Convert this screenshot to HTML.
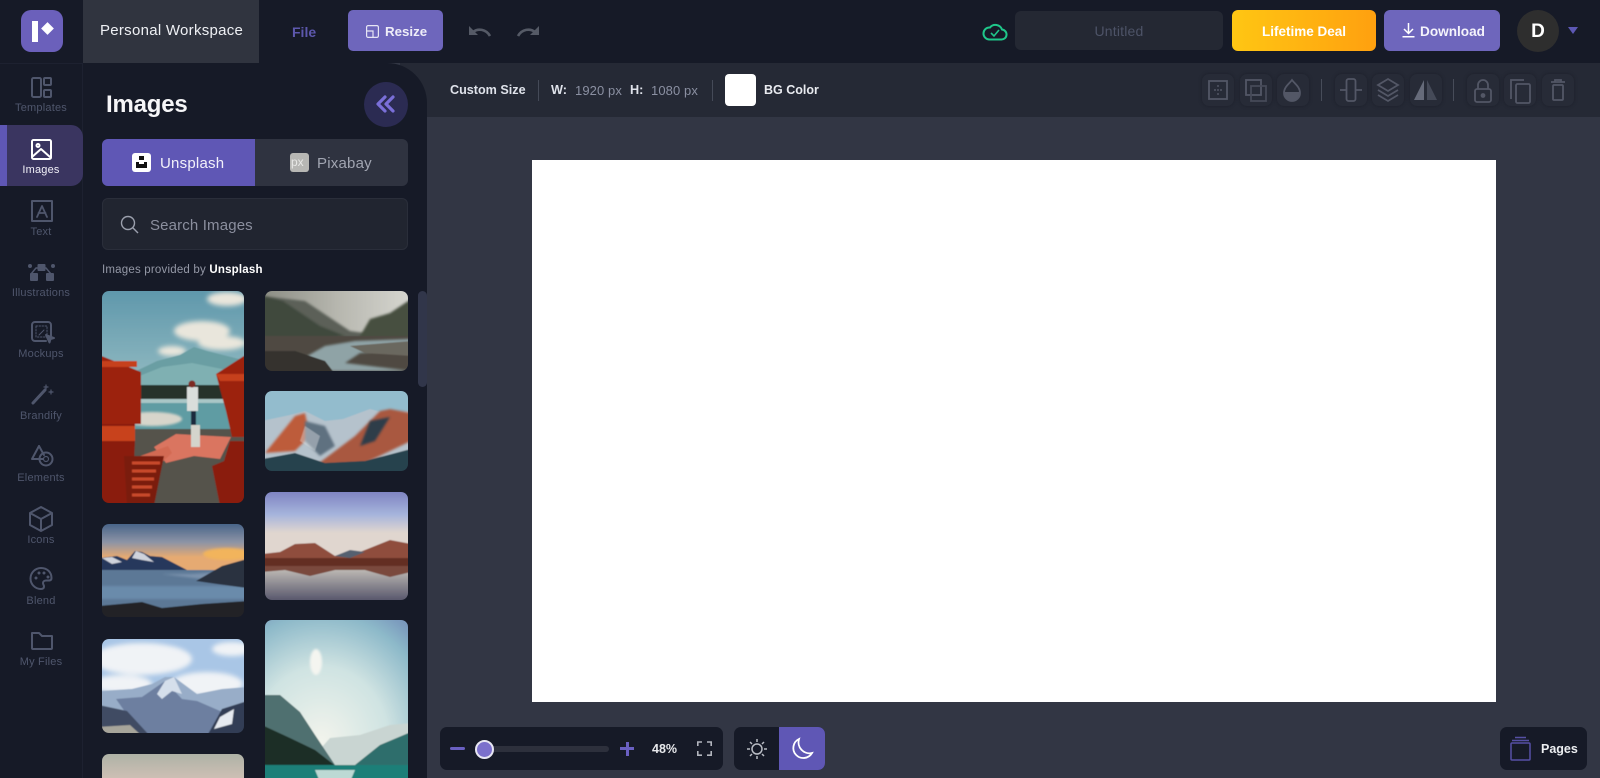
<!DOCTYPE html>
<html><head><meta charset="utf-8"><style>
*{box-sizing:border-box;margin:0;padding:0}
html,body{width:1600px;height:778px;overflow:hidden;background:#323644;font-family:"Liberation Sans",sans-serif}
.a{position:absolute}
.t{position:absolute;white-space:nowrap;line-height:1}
.l{position:absolute;left:0;width:82px;text-align:center;font-size:11px;letter-spacing:.2px;color:#4f566c;line-height:1}
svg{position:absolute;overflow:visible}
.ic{fill:none;stroke:#4f566c;stroke-width:2;stroke-linejoin:round;stroke-linecap:round}
.b{position:absolute;top:74px;width:32px;height:32px;border-radius:7px;background:#272b37;box-shadow:0 0 3px #1c1f2a}
.tb{fill:none;stroke:#535766;stroke-width:1.800}
</style></head><body>
<svg width="0" height="0" style="left:0;top:0"><defs><filter id="s" x="-2%" y="-2%" width="104%" height="104%"><feGaussianBlur stdDeviation=".6"/></filter><filter id="bl"><feGaussianBlur stdDeviation="2.500"/></filter><filter id="bs"><feGaussianBlur stdDeviation="1"/></filter></defs></svg>
<div class="a" style="left:0;top:0;width:1600px;height:63px;background:#161a27"></div>
<div class="a" style="left:0;top:63px;width:83px;height:715px;background:#161a27;border-right:1px solid #1d2130;border-top:1px solid #1d2130"></div>
<div class="a" style="left:83px;top:0;width:176px;height:63px;background:#30343f"></div>
<div class="a" style="left:21px;top:10px;width:42px;height:42px;border-radius:10px;background:#6b60bb"></div>
<div class="a" style="left:32px;top:21px;width:6px;height:21px;background:#fff"></div>
<div class="a" style="left:43px;top:24px;width:9px;height:9px;background:#fff;transform:rotate(45deg)"></div>
<div class="t" style="left:100px;top:23px;font-size:15px;letter-spacing:.28px;color:#eef0f4">Personal Workspace</div>
<div class="t" style="left:292px;top:25px;font-size:14px;font-weight:bold;color:#5d58ad">File</div>
<div class="a" style="left:348px;top:10px;width:95px;height:41px;border-radius:5px;background:#6e66bc"></div>
<svg style="left:366px;top:25px" width="13" height="13" fill="none" stroke="#e6e5f4" stroke-width="1.200"><rect x=".6" y=".6" width="11.800" height="11.800" rx="1.500"/><path d="M.6 6H7V12.400"/></svg>
<div class="t" style="left:385px;top:25px;font-size:13.300px;font-weight:bold;color:#eeedf8">Resize</div>
<svg style="left:468px;top:24px" width="24" height="14" fill="none" stroke="#555a66" stroke-width="2.600"><path d="M22 12C18 5 10 4 5 8"/><path d="M1 2V11H10Z" fill="#555a66" stroke="none"/></svg>
<svg style="left:516px;top:24px" width="24" height="14" fill="none" stroke="#555a66" stroke-width="2.600"><path d="M2 12C6 5 14 4 19 8"/><path d="M23 2V11H14Z" fill="#555a66" stroke="none"/></svg>

<svg style="left:982px;top:22px" width="26" height="19" fill="none" stroke="#1fc78a" stroke-width="2"><path d="M7 17.500H19a5 5 0 0 0 1-10A7 7 0 0 0 8 5.500 6 6 0 0 0 7 17.500Z"/><path d="M9 11l3 3 5-6" stroke-width="1.600"/></svg>
<div class="a" style="left:1015px;top:11px;width:208px;height:39px;border-radius:6px;background:#242833"></div>
<div class="t" style="left:1015px;width:208px;text-align:center;top:24px;font-size:14px;letter-spacing:.2px;color:#4d5367">Untitled</div>
<div class="a" style="left:1232px;top:10px;width:144px;height:41px;border-radius:6px;background:linear-gradient(90deg,#ffc613,#ffa00f)"></div>
<div class="t" style="left:1232px;width:144px;text-align:center;top:25px;font-size:13.500px;font-weight:bold;color:#fff">Lifetime Deal</div>
<div class="a" style="left:1384px;top:10px;width:116px;height:41px;border-radius:6px;background:#6e66bc"></div>
<svg style="left:1402px;top:23px" width="13" height="15" fill="none" stroke="#fff" stroke-width="1.500"><path d="M6.500 0V10M2 6l4.500 4.500L11 6M.5 13.800H12.500"/></svg>
<div class="t" style="left:1420px;top:25px;font-size:13.600px;font-weight:bold;color:#f4f3fb">Download</div>
<div class="a" style="left:1517px;top:10px;width:42px;height:42px;border-radius:50%;background:#2e2e2e"></div>
<div class="t" style="left:1517px;width:42px;text-align:center;top:22px;font-size:19px;font-weight:bold;color:#fff">D</div>
<div class="a" style="left:1568px;top:27px;width:0;height:0;border-left:5.500px solid transparent;border-right:5.500px solid transparent;border-top:7px solid #5d58b4"></div>

<div class="a" style="left:427px;top:63px;width:1173px;height:54px;background:#252935"></div>
<div class="a" style="left:400px;top:63px;width:60px;height:54px;background:#252935"></div>
<div class="a" style="left:83px;top:63px;width:344px;height:715px;background:#161a27;border-top-right-radius:40px"></div>
<div class="a" style="left:532px;top:160px;width:964px;height:542px;background:#fff"></div>

<div class="t" style="left:450px;top:84px;font-size:12.600px;font-weight:bold;color:#dfe2ea">Custom Size</div>
<div class="a" style="left:538px;top:80px;width:1px;height:21px;background:#454a58"></div>
<div class="t" style="left:551px;top:84px;font-size:12.700px;font-weight:bold;color:#dfe2ea">W:</div>
<div class="t" style="left:575px;top:84px;font-size:13px;letter-spacing:.1px;color:#8b90a2">1920 px</div>
<div class="t" style="left:630px;top:84px;font-size:12.700px;font-weight:bold;color:#dfe2ea">H:</div>
<div class="t" style="left:651px;top:84px;font-size:13px;letter-spacing:.1px;color:#8b90a2">1080 px</div>
<div class="a" style="left:712px;top:80px;width:1px;height:21px;background:#454a58"></div>
<div class="a" style="left:725px;top:74px;width:31px;height:32px;border-radius:4px;background:#fff"></div>
<div class="t" style="left:764px;top:84px;font-size:12.500px;font-weight:bold;color:#e9ebf0">BG Color</div>

<div class="b" style="left:1202px"></div><div class="b" style="left:1240px"></div><div class="b" style="left:1277px"></div>
<div class="b" style="left:1335px"></div><div class="b" style="left:1372px"></div><div class="b" style="left:1410px"></div>
<div class="b" style="left:1467px"></div><div class="b" style="left:1504px"></div><div class="b" style="left:1542px"></div>
<div class="a" style="left:1321px;top:79px;width:1px;height:22px;background:#474c59"></div>
<div class="a" style="left:1453px;top:79px;width:1px;height:22px;background:#474c59"></div>
<svg style="left:0;top:0" width="1600" height="778">
<g class="tb">
<rect x="1209" y="81" width="18" height="18"/><path d="M1218 85v2M1218 89v2M1218 93v2M1214 90h2M1220 90h2" stroke-width="1.400"/>
<rect x="1246" y="80" width="15" height="15"/><rect x="1251" y="86" width="15" height="15" stroke="#464a58"/>
<path d="M1292 80c-3 4-8 7-8 13a8 8 0 0 0 16 0c0-6-5-9-8-13Z"/><path d="M1284 92h16c0 5-4 9-8 9s-8-4-8-9Z" fill="#535766" stroke="none"/>
<path d="M1340 90h6M1356 90h6"/><rect x="1346.500" y="79" width="9" height="22" rx="2"/>
<path d="M1388 79l10 6-10 6-10-6ZM1378 90l10 6 10-6M1378 95l10 6 10-6"/>
<path d="M1424 80v20h-10Z" fill="#666b7a" stroke="none"/><path d="M1427 80v20h10Z" fill="#454a58" stroke="none"/>
<rect x="1475" y="89" width="16" height="13" rx="2"/><path d="M1478 89v-4a5 5 0 0 1 10 0v4"/><circle cx="1483" cy="95.500" r="1.500" fill="#535766"/>
<path d="M1511 99V80h13"/><rect x="1516" y="84" width="14" height="19" rx="1.500"/>
<path d="M1551 82h14M1555 82v-2h6v2"/><rect x="1553" y="85" width="10" height="15" rx="1"/>
</g>
</svg>

<!-- sidebar -->
<div class="a" style="left:0;top:125px;width:83px;height:61px;border-radius:0 12px 12px 0;background:#3a3560"></div>
<div class="a" style="left:0;top:125px;width:7px;height:61px;background:#5f57b5"></div>
<svg style="left:0;top:0" width="83" height="700" class="ic">
<rect x="32" y="78" width="9" height="19" rx="1.500"/><rect x="44" y="78" width="7" height="7" rx="1"/><rect x="44" y="90" width="7" height="7" rx="1"/>
<g stroke="#fff"><rect x="32" y="140" width="19" height="19" rx="1.500"/><circle cx="38" cy="145.500" r="1.500"/><path d="M32 157l9-8 9 8"/></g>
<rect x="32" y="201" width="20" height="20"/><path d="M37 217l5-11 5 11M38.500 213h7" stroke-width="1.800"/>
<path d="M36 268h10M36 268l-5 6M46 268l5 6" stroke-width="1.500"/><rect x="38.500" y="265" width="6" height="5" fill="#4f566c"/><rect x="31" y="274" width="6" height="6" fill="#4f566c"/><rect x="47" y="274" width="6" height="6" fill="#4f566c"/><circle cx="30" cy="266" r="1"/><circle cx="53" cy="266" r="1"/>
<path d="M51 337V325a3 3 0 0 0-3-3H35a3 3 0 0 0-3 3v13a3 3 0 0 0 3 3H46"/><path d="M36 326h11v11H36Z" stroke-width="1" stroke-dasharray="1.500 1.500"/><path d="M46 335l8 3-3.500 1-1 3.500Z" fill="#4f566c"/><path d="M39 335l5-5" stroke-width="1"/>
<path d="M33 403l12-13" stroke-width="3"/><path d="M46 385v4M44 387h4M51 390v4M49 392h4" stroke-width="1.200"/>
<path d="M39 446l-7 13h11"/><path d="M39 446l5 9"/><circle cx="46" cy="459" r="6.500"/><circle cx="46" cy="459" r="2.500" stroke-width="1.200"/>
<path d="M41 507l11 6v12l-11 6-11-6v-12ZM30 513l11 6 11-6M41 519v12"/>
<path d="M41 568a10.500 10.500 0 0 0 0 21c2 0 3-1 3-2.500s-1-2-1-3.500 1.500-2.500 3-2.500h3.500a2.500 2.500 0 0 0 2-2.500c0-6-4.500-10-10.500-10Z"/><g fill="#4f566c" stroke="none"><circle cx="36" cy="578" r="1.500"/><circle cx="39" cy="573" r="1.500"/><circle cx="44" cy="573" r="1.500"/><circle cx="48" cy="577" r="1.500"/></g>
<path d="M32 633h7l3 3h10v12a1 1 0 0 1-1 1H33a1 1 0 0 1-1-1Z"/>
</svg>
<div class="l" style="top:103px">Templates</div>
<div class="l" style="top:165px;color:#f1f0f8">Images</div>
<div class="l" style="top:227px">Text</div>
<div class="l" style="top:288px">Illustrations</div>
<div class="l" style="top:349px">Mockups</div>
<div class="l" style="top:411px">Brandify</div>
<div class="l" style="top:473px">Elements</div>
<div class="l" style="top:535px">Icons</div>
<div class="l" style="top:596px">Blend</div>
<div class="l" style="top:657px">My Files</div>

<!-- panel -->
<div class="t" style="left:106px;top:93px;font-size:24px;font-weight:bold;color:#f6f6f8;letter-spacing:-.2px">Images</div>
<div class="a" style="left:364px;top:82px;width:44px;height:45px;border-radius:50%;background:#2b2b52"></div>
<svg style="left:376px;top:95px" width="20" height="18" fill="none" stroke="#7a6fd8" stroke-width="3.200" stroke-linecap="round" stroke-linejoin="round"><path d="M9 2L2 9l7 7M17 2l-7 7 7 7"/></svg>
<div class="a" style="left:102px;top:139px;width:306px;height:47px;border-radius:6px;background:#2f3340"></div>
<div class="a" style="left:102px;top:139px;width:153px;height:47px;border-radius:6px 0 0 6px;background:#5f57b5"></div>
<div class="a" style="left:132px;top:153px;width:19px;height:19px;border-radius:3px;background:#fff"></div>
<div class="a" style="left:139px;top:156px;width:5px;height:4px;background:#111"></div>
<div class="a" style="left:136px;top:162px;width:11px;height:6px;background:#111"></div>
<div class="a" style="left:139px;top:162px;width:5px;height:2px;background:#fff"></div>
<div class="t" style="left:160px;top:156px;font-size:15px;letter-spacing:.22px;color:#f2f1fa">Unsplash</div>
<div class="a" style="left:290px;top:153px;width:19px;height:19px;border-radius:3px;background:#b7b7b4"></div>
<div class="t" style="left:291px;top:156px;font-size:12px;color:#e8e8e6">px</div>
<div class="t" style="left:317px;top:156px;font-size:15px;letter-spacing:.22px;color:#a1a5b1">Pixabay</div>
<div class="a" style="left:102px;top:198px;width:306px;height:52px;border-radius:6px;background:#212530;border:1px solid #2a2e3a"></div>
<svg style="left:120px;top:215px" width="20" height="20" fill="none" stroke="#9ba0ad" stroke-width="1.400"><circle cx="8" cy="8" r="6.500"/><path d="M12.800 12.800L18 18"/></svg>
<div class="t" style="left:150px;top:218px;font-size:15px;letter-spacing:.15px;color:#8b8f9e">Search Images</div>
<div class="t" style="left:102px;top:265px;font-size:11.500px;letter-spacing:.2px;color:#9498a6">Images provided by <b style="color:#fff">Unsplash</b></div>
<div class="a" style="left:418px;top:291px;width:9px;height:96px;border-radius:5px;background:#31364a"></div>

<!-- images -->
<svg style="left:102px;top:291px" width="142" height="212" viewBox="0 0 142 212">
<defs><clipPath id="c1"><rect width="142" height="212" rx="7"/></clipPath><linearGradient id="g1" x1="0" y1="0" x2="0" y2="1"><stop offset="0" stop-color="#5e97ab"/><stop offset="1" stop-color="#a8c9cb"/></linearGradient></defs>
<g clip-path="url(#c1)"><g filter="url(#s)">
<rect x="-3" y="-3" width="148" height="138" fill="url(#g1)"/>
<g filter="url(#bl)" fill="#e9e6dc"><ellipse cx="100" cy="40" rx="28" ry="10"/><ellipse cx="125" cy="8" rx="20" ry="7"/><ellipse cx="120" cy="52" rx="24" ry="7"/><ellipse cx="70" cy="60" rx="14" ry="5"/></g>
<path d="M30 82L55 70 78 64 92 56 105 60 125 65 145 70V110H30Z" fill="#6b9ea3"/>
<path d="M30 88L60 76 90 72 120 78 145 82V100H30Z" fill="#7fb0b2"/>
<rect x="30" y="94" width="115" height="14" fill="#26312c"/>
<rect x="-3" y="108" width="148" height="36" fill="#5f9ca3"/>
<rect x="30" y="108" width="115" height="4" fill="#a9c6c6"/>
<ellipse cx="50" cy="128" rx="30" ry="7" fill="#d7d5cb" filter="url(#bs)"/>
<rect x="-3" y="138" width="148" height="77" fill="#55534b"/>
<path d="M52 156L74 143 129 146 118 168 92 165 64 172Z" fill="#da7560"/>
<path d="M30 168L66 155 70 162 45 185Z" fill="#d36a52"/>
<path d="M-3 64L39 81V133H-3Z" fill="#9c2410"/><path d="M-3 70H35V76H-3Z" fill="#c6401f"/>
<path d="M-3 133H33V150L30 215H-3Z" fill="#8a1e0f"/><path d="M-3 135H33V150H-3Z" fill="#c8431f"/>
<path d="M22 165H62L52 215H25Z" fill="#7a1d0e"/><path d="M30 172H58M30 180H54M30 188H52M30 196H50M30 204H48" stroke="#c9482a" stroke-width="3"/>
<path d="M145 63L114 83 124 120 130 146H145Z" fill="#9c2410"/><path d="M114 83H145V90H118Z" fill="#c6401f"/>
<path d="M128 150H145V215H118L110 175 122 170Z" fill="#8a1e0f"/>
<rect x="85" y="96" width="11" height="24" fill="#d9dedb"/><rect x="89" y="120" width="5" height="14" fill="#1e2a3d"/><circle cx="90" cy="93" r="3.500" fill="#7d2a20"/><rect x="89" y="134" width="9" height="22" fill="#d4d4cc"/>
</g></g></svg>

<svg style="left:265px;top:291px" width="143" height="80" viewBox="0 0 143 80">
<defs><clipPath id="c2"><rect width="143" height="80" rx="7"/></clipPath><linearGradient id="g2" x1="0" y1="0" x2="1" y2="0"><stop offset="0" stop-color="#8b8d84"/><stop offset=".5" stop-color="#b6b6ae"/><stop offset="1" stop-color="#d6d6d0"/></linearGradient></defs>
<g clip-path="url(#c2)"><g filter="url(#s)">
<rect x="-3" y="-3" width="149" height="86" fill="url(#g2)"/>
<path d="M-3 5L40 10 85 40 100 42 146 15V50H-3Z" fill="#5c6058" filter="url(#bs)"/>
<path d="M-3 5L18 10 55 35 80 45 -3 55Z" fill="#3f4a3d" filter="url(#bs)"/>
<path d="M95 45L105 28 125 22 146 8V52H95Z" fill="#46503f" filter="url(#bs)"/>
<rect x="-3" y="45" width="149" height="38" fill="#4f4a42"/>
<path d="M30 72L60 55 90 50 146 48V58L95 62 80 72 146 80H40Z" fill="#8fa3a6" filter="url(#bs)"/>
<path d="M85 55L146 50V65L100 62Z" fill="#6b675e"/>
<path d="M-3 60H30L60 70 70 83H-3Z" fill="#35332d"/>
</g></g></svg>

<svg style="left:265px;top:391px" width="143" height="80" viewBox="0 0 143 80">
<defs><clipPath id="c3"><rect width="143" height="80" rx="7"/></clipPath></defs>
<g clip-path="url(#c3)"><g filter="url(#s)">
<rect x="-3" y="-3" width="149" height="86" fill="#93bccd"/>
<path d="M-3 30L25 24 40 20 60 30 78 28 105 18 120 22 146 20V83H-3Z" fill="#b5c2cc"/>
<path d="M0 62L30 25 40 22 45 45 30 60Z" fill="#bd5c3a" filter="url(#bs)"/>
<path d="M50 75L90 45 115 20 125 18 146 22V50L100 72Z" fill="#a9583f" filter="url(#bs)"/>
<path d="M40 30L60 35 70 55 55 65 40 50Z" fill="#5f7180" filter="url(#bs)"/>
<path d="M105 30L125 26 110 50 95 55Z" fill="#2f3c48" filter="url(#bs)"/>
<path d="M-3 68L30 62 60 72 100 70 146 58V83H-3Z" fill="#27424e"/>
<path d="M40 35L55 45 50 60 35 50Z" fill="#e5e9ec" opacity=".4"/>
</g></g></svg>

<svg style="left:265px;top:492px" width="143" height="108" viewBox="0 0 143 108">
<defs><clipPath id="c4"><rect width="143" height="108" rx="7"/></clipPath><linearGradient id="g4" x1="0" y1="0" x2="0" y2="1"><stop offset="0" stop-color="#7a7fbf"/><stop offset=".35" stop-color="#a6b4dc"/><stop offset=".6" stop-color="#e0d6cf"/></linearGradient><linearGradient id="g4b" x1="0" y1="0" x2="0" y2="1"><stop offset="0" stop-color="#c9c4bc"/><stop offset="1" stop-color="#4f4f66"/></linearGradient></defs>
<g clip-path="url(#c4)"><g filter="url(#s)">
<rect x="-3" y="-3" width="149" height="73" fill="url(#g4)"/>
<path d="M-3 62L15 60 30 52 50 51 70 64 90 62 110 54 125 48 146 52V75H-3Z" fill="#8f4d3d"/>
<path d="M70 64L85 58 100 60 85 66Z" fill="#546070"/>
<rect x="-3" y="66" width="149" height="8" fill="#642e20"/>
<rect x="-3" y="74" width="149" height="37" fill="url(#g4b)"/>
<path d="M-3 74H146V80L125 85 100 78 70 78 45 84 20 78 -3 80Z" fill="#7a4a3d"/>
</g></g></svg>

<svg style="left:102px;top:524px" width="142" height="93" viewBox="0 0 142 93">
<defs><clipPath id="c5"><rect width="142" height="93" rx="7"/></clipPath><linearGradient id="g5" x1="0" y1="0" x2="0" y2="1"><stop offset="0" stop-color="#3d5c84"/><stop offset=".4" stop-color="#8d94a6"/><stop offset=".68" stop-color="#e6aa72"/></linearGradient></defs>
<g clip-path="url(#c5)"><g filter="url(#s)">
<rect x="-3" y="-3" width="148" height="53" fill="url(#g5)"/>
<ellipse cx="125" cy="30" rx="24" ry="6" fill="#f2b45c" filter="url(#bs)"/>
<path d="M-3 34L15 32 25 36 33 27 40 28 48 32 60 33 85 46 -3 56Z" fill="#28395c"/>
<path d="M0 34L10 33 20 38 10 40ZM30 34L34 27 42 30 52 38 40 36Z" fill="#cfd3dc"/>
<rect x="-3" y="46" width="148" height="40" fill="#5c7896"/>
<path d="M-3 50H90L145 46V60L100 55 60 50Z" fill="#7b93ad" filter="url(#bs)"/>
<path d="M-3 62H145V75H-3Z" fill="#6a8bab" filter="url(#bs)"/>
<path d="M94 57L120 42 145 35V64L115 60Z" fill="#2c3140"/>
<path d="M-3 82L40 78 60 84 100 80 145 77V96H-3Z" fill="#232425"/>
</g></g></svg>

<svg style="left:102px;top:639px" width="142" height="94" viewBox="0 0 142 94">
<defs><clipPath id="c6"><rect width="142" height="94" rx="7"/></clipPath></defs>
<g clip-path="url(#c6)"><g filter="url(#s)">
<rect x="-3" y="-3" width="148" height="100" fill="#a9c6e6"/>
<g filter="url(#bl)" fill="#f0f3f6"><ellipse cx="40" cy="20" rx="50" ry="16"/><ellipse cx="105" cy="45" rx="36" ry="12"/><ellipse cx="20" cy="45" rx="30" ry="9"/><ellipse cx="130" cy="10" rx="20" ry="7"/></g>
<path d="M-3 52L30 50 50 45 63 38 72 38 95 55 120 50 145 48V97H-3Z" fill="#98adc8"/>
<path d="M14 60L40 58 63 42 80 60 95 62 125 75 120 97H40Z" fill="#6d7fa0"/>
<path d="M63 42L72 38 80 55 70 52 60 60 55 55Z" fill="#d5dfeb"/>
<path d="M105 97L120 70 145 62V97Z" fill="#313c55"/><path d="M118 78L132 70 130 85 112 90Z" fill="#e6eaf0"/>
<path d="M-3 66L25 72 48 97H-3Z" fill="#3f4b63"/><path d="M-3 88L28 86 40 97H-3Z" fill="#a7a59b"/>
</g></g></svg>

<svg style="left:102px;top:754px" width="142" height="24" viewBox="0 0 142 24"><defs><clipPath id="c7"><rect width="142" height="40" rx="7"/></clipPath><linearGradient id="g7" x1="0" y1="0" x2="0" y2="1"><stop offset="0" stop-color="#aeb2a6"/><stop offset="1" stop-color="#cdbfb4"/></linearGradient></defs><rect width="142" height="24" fill="url(#g7)" clip-path="url(#c7)"/></svg>

<svg style="left:265px;top:620px" width="143" height="158" viewBox="0 0 143 158">
<defs><clipPath id="c8"><rect width="143" height="170" rx="7"/></clipPath><radialGradient id="g8" cx=".4" cy=".75" r=".9"><stop offset="0" stop-color="#f2f4ec"/><stop offset=".5" stop-color="#cfe3e2"/><stop offset=".85" stop-color="#8db9c9"/><stop offset="1" stop-color="#7a99bd"/></radialGradient></defs>
<g clip-path="url(#c8)"><g filter="url(#s)">
<rect x="-3" y="-3" width="149" height="165" fill="url(#g8)"/>
<ellipse cx="51" cy="42" rx="6" ry="13" fill="#f4f5f0" filter="url(#bs)"/>
<path d="M50 135L65 118 95 115 125 105 146 103V162H50Z" fill="#c9d5d2"/>
<path d="M-3 75L15 75 35 92 50 115 70 145H-3Z" fill="#50706f"/>
<path d="M-3 105L25 118 50 130 72 147H-3Z" fill="#1d2f28"/>
<path d="M90 145L115 125 146 112V150Z" fill="#2f6e6c"/>
<rect x="-3" y="145" width="149" height="17" fill="#1f7f78"/>
<path d="M50 150H90L85 162H55Z" fill="#bcd9d4"/>
</g></g></svg>

<!-- bottom -->
<div class="a" style="left:440px;top:727px;width:283px;height:43px;border-radius:7px;background:#161a27"></div>
<div class="a" style="left:450px;top:747px;width:15px;height:3px;border-radius:2px;background:#6a60c2"></div>
<div class="a" style="left:484px;top:746px;width:125px;height:6px;border-radius:3px;background:#2d303c"></div>
<div class="a" style="left:475px;top:740px;width:19px;height:19px;border-radius:50%;background:#7b70cc;border:2px solid #e7e6f2"></div>
<div class="a" style="left:620px;top:747px;width:14px;height:3px;background:#6a60c2"></div>
<div class="a" style="left:625.500px;top:742px;width:3px;height:14px;background:#6a60c2"></div>
<div class="t" style="left:652px;top:743px;font-size:12.500px;font-weight:bold;color:#e8e9ec">48%</div>
<svg style="left:697px;top:741px" width="15" height="15" fill="none" stroke="#b2b5bd" stroke-width="1.600"><path d="M.8 5V1H5M10 1h4.200V5M14.200 10v4.200H10M5 14.200H.8V10"/></svg>
<div class="a" style="left:734px;top:727px;width:91px;height:43px;border-radius:7px;background:#161a27"></div>
<div class="a" style="left:779px;top:727px;width:46px;height:43px;border-radius:0 7px 7px 0;background:#5f57b5"></div>
<svg style="left:746px;top:737px" width="22" height="24" fill="none" stroke="#b9bcc4" stroke-width="1.500"><circle cx="11" cy="12" r="5"/><path d="M11 2v3M11 19v3M1 12h3M18 12h3M4 5l2 2M16 17l2 2M18 5l-2 2M6 17l-2 2"/></svg>
<svg style="left:790px;top:737px" width="24" height="24" fill="none" stroke="#fff" stroke-width="1.800"><path d="M9 2A10 10 0 1 0 22 16 11 11 0 0 1 9 2Z"/></svg>
<div class="a" style="left:1500px;top:727px;width:87px;height:43px;border-radius:7px;background:#161a27"></div>
<svg style="left:1510px;top:735px" width="22" height="26" fill="none" stroke="#5650a5" stroke-width="1.500"><rect x="1" y="8" width="19" height="17" rx="1"/><path d="M2 5.500H19M5 2.500H16"/></svg>
<div class="t" style="left:1541px;top:743px;font-size:12.500px;font-weight:bold;color:#eceef1">Pages</div>
</body></html>
